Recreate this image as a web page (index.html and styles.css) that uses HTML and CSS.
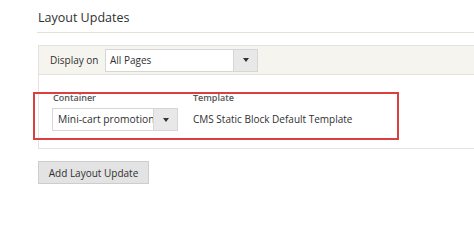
FILE: index.html
```html
<!DOCTYPE html>
<html>
<head>
<meta charset="utf-8">
<link rel="stylesheet" href="styles.css">
</head>
<body>
<div class="page">
  <h2 class="title">Layout Updates</h2>
  <div class="box">
    <div class="box-head">
      <span class="head-label">Display on</span>
      <div class="select select-pages">
        <span class="select-text">All Pages</span>
        <span class="select-btn"><span class="caret"></span></span>
      </div>
    </div>
    <div class="box-body">
      <div class="field field-container">
        <div class="field-label">Container</div>
        <div class="select select-mini">
          <span class="select-text">Mini-cart promotion</span>
          <span class="select-btn"><span class="caret"></span></span>
        </div>
      </div>
      <div class="field field-template">
        <div class="field-label">Template</div>
        <div class="field-value">CMS Static Block Default Template</div>
      </div>
      <div class="highlight"></div>
    </div>
  </div>
  <button class="btn">Add Layout Update</button>
</div>
</body>
</html>
```
FILE: styles.css
```css
html, body {
  margin: 0;
  padding: 0;
  background: #fff;
  overflow: hidden;
}
body {
  font-family: "Open Sans", "Liberation Sans", sans-serif;
  color: #303030;
}
.page {
  padding-left: 37px;
}
.title {
  margin: 0;
  padding: 8px 0 0 1px;
  height: 24px;
  font-size: 12.5px;
  font-weight: 400;
  line-height: 20px;
  color: #303030;
  border-bottom: 1px solid #e3e0d8;
}
.box {
  margin-top: 12px;
  margin-left: 1px;
  width: 600px;
  border: 1px solid #e3e3e3;
  border-right: none;
}
.box-head {
  height: 28px;
  background: #f6f4ef;
  border-bottom: 1px solid #e4e1da;
  display: flex;
  align-items: center;
  padding-left: 11px;
}
.head-label {
  font-size: 10px;
  color: #303030;
  width: 55px;
}
.select {
  display: flex;
  height: 23px;
  box-sizing: border-box;
  border: 1px solid #d6d6d6;
  background: #fff;
}
.select-pages {
  width: 153px;
}
.select-mini {
  width: 126px;
}
.select-text {
  flex: 1;
  overflow: hidden;
  white-space: nowrap;
  font-size: 10px;
  line-height: 21px;
  padding-left: 4px;
  color: #303030;
}
.select-mini .select-text {
  padding-left: 5px;
  font-size: 10.3px;
}
.select-btn {
  width: 23px;
  flex: none;
  background: #e8e8e8;
  border-left: 1px solid #d6d6d6;
  display: flex;
  align-items: center;
  justify-content: center;
}
.caret {
  width: 0;
  height: 0;
  border-left: 3px solid transparent;
  border-right: 3px solid transparent;
  border-top: 4px solid #333;
}
.box-body {
  position: relative;
  height: 73px;
  display: flex;
  padding-left: 13px;
  padding-top: 17px;
  box-sizing: border-box;
}
.field-label {
  font-size: 9px;
  font-weight: 600;
  color: #555;
  line-height: 12px;
  height: 16px;
}
.field-container {
  width: 141px;
}
.field-container .field-label {
  padding-left: 1px;
}
.field-value {
  font-size: 10px;
  line-height: 23px;
  color: #303030;
}
.highlight {
  position: absolute;
  left: -6px;
  top: 17px;
  width: 366px;
  height: 48px;
  box-sizing: border-box;
  border: 2px solid #d9403f;
}
.btn {
  display: block;
  margin-top: 12px;
  margin-left: 1px;
  width: 111px;
  height: 23px;
  padding: 0;
  background: #e3e3e3;
  border: 1px solid #cdcdcd;
  font-family: "Open Sans", "Liberation Sans", sans-serif;
  font-size: 10px;
  color: #303030;
}
```
